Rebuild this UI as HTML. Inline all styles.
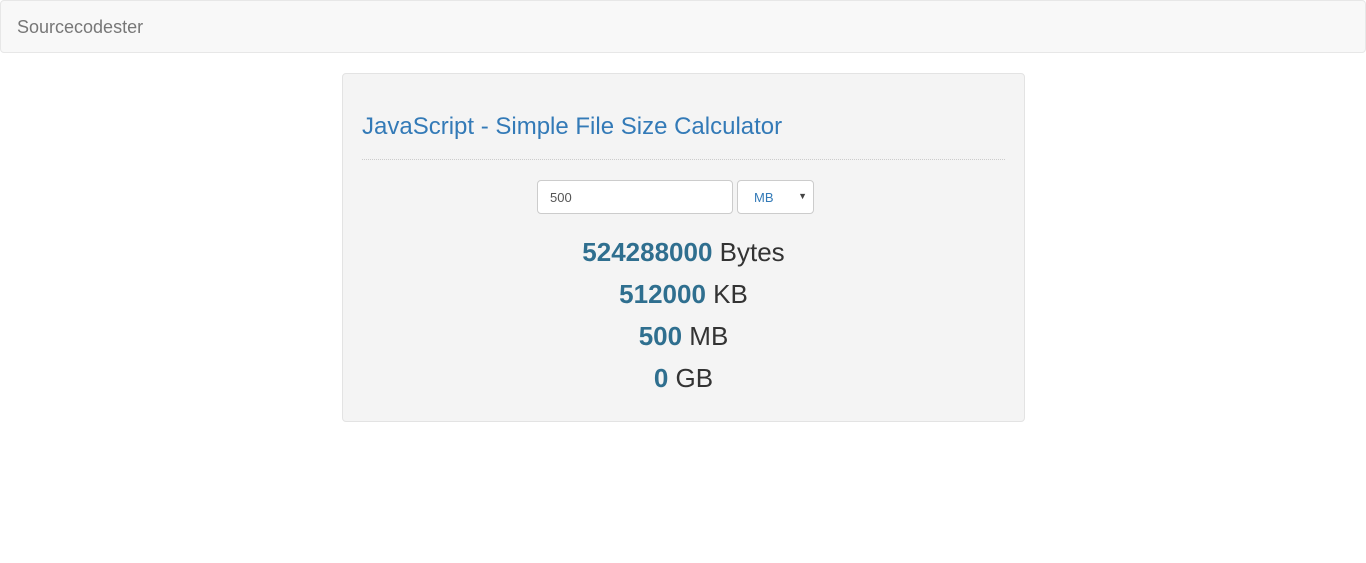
<!DOCTYPE html>
<html><head><style>
body{margin:0;font-family:"Liberation Sans",sans-serif;background:#fff;width:1366px;height:563px;overflow:hidden;position:relative}
.nav{position:absolute;left:0;top:0;width:1364px;height:51px;background:#f8f8f8;border:1px solid #e7e7e7;border-radius:4px}
.nav span{position:absolute;left:16px;top:16px;font-size:18px;color:#777}
.well{position:absolute;left:342px;top:73px;width:681px;height:347px;background:#f4f4f4;border:1px solid #e3e3e3;border-radius:4px}
h3{position:absolute;left:19px;top:39px;margin:0;font-weight:normal;font-size:24px;color:#337ab7}
.hr{position:absolute;left:19px;top:85px;width:643px;border-top:1px dotted #ccc}
.in{position:absolute;left:194px;top:106px;width:196px;height:34px;background:#fff;border:1px solid #ccc;border-radius:4px;font-size:13px;color:#555;box-sizing:border-box;padding:9px 12px}
.sel{position:absolute;left:394px;top:106px;width:77px;height:34px;background:#fff;border:1px solid #ccc;border-radius:4px;font-size:13px;color:#337ab7;box-sizing:border-box;padding:9px 0 0 16px}
.sel i{position:absolute;right:6px;top:10px;font-style:normal;font-size:9px;color:#444}
.r{position:absolute;left:0;width:681px;text-align:center;font-size:26px;color:#333}
.r b{color:#2f6f8f}
</style></head><body>
<div class="nav"><span>Sourcecodester</span></div>
<div class="well">
<h3>JavaScript - Simple File Size Calculator</h3>
<div class="hr"></div>
<div class="in">500</div>
<div class="sel">MB<i>▼</i></div>
<div class="r" style="top:163px"><b>524288000</b> Bytes</div>
<div class="r" style="top:205px"><b>512000</b> KB</div>
<div class="r" style="top:247px"><b>500</b> MB</div>
<div class="r" style="top:289px"><b>0</b> GB</div>
</div>
</body></html>
